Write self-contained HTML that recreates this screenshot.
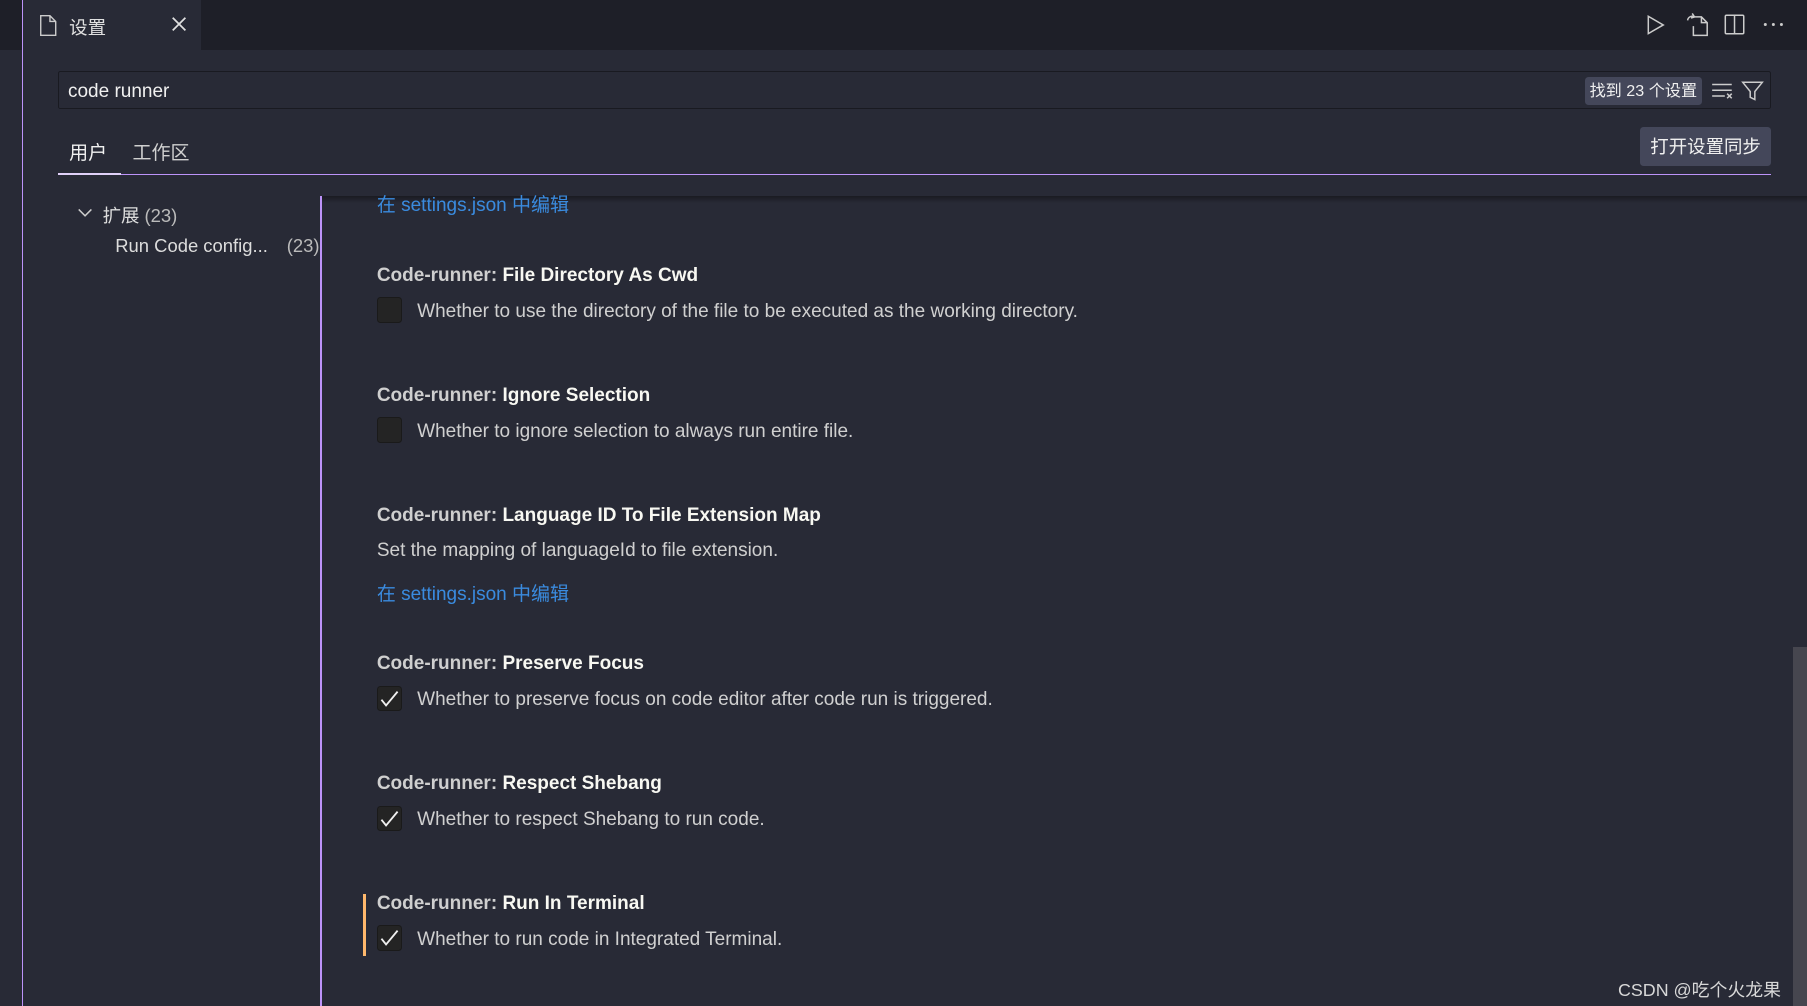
<!DOCTYPE html>
<html><head><meta charset="utf-8"><style>
html,body{margin:0;padding:0;background:#282a36;overflow:hidden}
body{zoom:1.15242;width:1568px;height:873px;position:relative;font-family:"Liberation Sans","Noto Sans CJK SC",sans-serif;color:#cccccc}
.a{position:absolute}
.vline{position:absolute;width:1px;background:#bd93f9}
.title{font-size:16.5px;font-weight:bold;color:#cfcfcf;white-space:nowrap}
.title b{color:#f8f8f2}
.desc{font-size:16.5px;color:#d0d0d0;white-space:nowrap}
.cb{position:absolute;width:22px;height:22px;background:#242424;border:1px solid #1a1a1a;border-radius:3px;box-sizing:border-box}
.link{color:#3a8bdf;font-size:16.5px;white-space:nowrap}
</style></head><body>
<div class="a" style="left:0;top:0;width:1568px;height:43px;background:#1e1f28"></div>
<div class="a" style="left:20px;top:0;width:154px;height:43px;background:#282a36"></div>
<div class="vline" style="left:19px;top:0;height:873px"></div>
<svg class="a" style="left:34px;top:12px" width="16" height="20" viewBox="0 0 16 20"><path d="M1.5 1.5h8l5 5v12h-13z M9.5 1.5v5h5" fill="none" stroke="#ccc" stroke-width="1.2"/></svg>
<div class="a" style="left:60px;top:12px;font-size:16px;color:#e0e0e0">设置</div>
<svg class="a" style="left:148px;top:14px" width="14" height="14" viewBox="0 0 14 14"><path d="M1.5 1.5l11 11M12.5 1.5l-11 11" stroke="#e0e0e0" stroke-width="1.5"/></svg>
<svg class="a" style="left:1428px;top:12px" width="18" height="20" viewBox="0 0 18 20"><path d="M2 2v15l13-7.5z" fill="none" stroke="#ccc" stroke-width="1.3"/></svg>
<svg class="a" style="left:1460px;top:9px" width="24" height="24" viewBox="0 0 24 24"><path d="M9 6h7l5 5v11H9v-8 M16 6v5h5 M4 9a4 4 0 0 1 6-3 M8 3l2 3-3 1" fill="none" stroke="#ccc" stroke-width="1.3"/></svg>
<svg class="a" style="left:1495px;top:11px" width="20" height="20" viewBox="0 0 20 20"><rect x="2" y="2" width="16" height="16" rx="1" fill="none" stroke="#ccc" stroke-width="1.3"/><path d="M10 2v16" stroke="#ccc" stroke-width="1.3"/></svg>
<svg class="a" style="left:1530px;top:18px" width="18" height="6" viewBox="0 0 18 6"><circle cx="2" cy="3" r="1.3" fill="#ccc"/><circle cx="9" cy="3" r="1.3" fill="#ccc"/><circle cx="16" cy="3" r="1.3" fill="#ccc"/></svg>

<div class="a" style="left:50px;top:62px;width:1487px;height:33px;background:#282a36;border:1px solid #191a21;box-sizing:border-box;border-radius:2px"></div>
<div class="a" style="left:59px;top:70px;font-size:16.5px;color:#f0f0f0">code runner</div>
<div class="a" style="left:1375px;top:67px;width:102px;height:24px;background:#44475a;border-radius:3px;font-size:14px;color:#f0f0f0;line-height:25px;text-align:center">找到 23 个设置</div>
<svg class="a" style="left:1485px;top:70px" width="20" height="18" viewBox="0 0 20 18"><path d="M1 3h17M1 8h17M1 13h11M14 11l4 4M18 11l-4 4" stroke="#ccc" stroke-width="1.3" fill="none"/></svg>
<svg class="a" style="left:1511px;top:69px" width="20" height="20" viewBox="0 0 20 20"><path d="M1.5 2h17l-6.5 8v7l-4-2v-5z" fill="none" stroke="#ccc" stroke-width="1.3"/></svg>

<div class="a" style="left:60px;top:120px;font-size:16.5px;color:#f0f0f0">用户</div>
<div class="a" style="left:115px;top:120px;font-size:16.5px;color:#d0d0d0">工作区</div>
<div class="a" style="left:50px;top:151px;width:1487px;height:1px;background:#bd93f9"></div>
<div class="a" style="left:50px;top:150px;width:55px;height:2px;background:#e0d0f8"></div>
<div class="a" style="left:1423px;top:110px;width:114px;height:34px;background:#44475a;border-radius:3px;font-size:16px;color:#f0f0f0;line-height:35px;text-align:center">打开设置同步</div>

<svg class="a" style="left:67px;top:179px" width="14" height="12" viewBox="0 0 14 12"><path d="M1.5 3l5.5 5.5L12.5 3" fill="none" stroke="#ccc" stroke-width="1.3"/></svg>
<div class="a" style="left:89px;top:175px;font-size:16px;color:#ddd">扩展 <span style="color:#bbb">(23)</span></div>
<div class="a" style="left:100px;top:204px;font-size:16px;color:#ddd">Run Code config... <span style="color:#bbb;margin-left:12px">(23)</span></div>
<div class="vline" style="left:278px;top:170px;height:703px"></div>
<div class="a" style="left:279px;top:170px;width:1289px;height:6px;background:linear-gradient(#1a1b22,rgba(40,42,54,0))"></div>

<div class="a link" style="left:327px;top:165px">在 settings.json 中编辑</div>

<div class="a title" style="left:327px;top:230px">Code-runner: <b>File Directory As Cwd</b></div>
<div class="cb" style="left:327px;top:258px"></div>
<div class="a desc" style="left:362px;top:261px">Whether to use the directory of the file to be executed as the working directory.</div>

<div class="a title" style="left:327px;top:334px">Code-runner: <b>Ignore Selection</b></div>
<div class="cb" style="left:327px;top:362px"></div>
<div class="a desc" style="left:362px;top:365px">Whether to ignore selection to always run entire file.</div>

<div class="a title" style="left:327px;top:438px">Code-runner: <b>Language ID To File Extension Map</b></div>
<div class="a desc" style="left:327px;top:469px">Set the mapping of languageId to file extension.</div>
<div class="a link" style="left:327px;top:502px">在 settings.json 中编辑</div>

<div class="a title" style="left:327px;top:567px">Code-runner: <b>Preserve Focus</b></div>
<div class="cb" style="left:327px;top:595px"><svg width="20" height="20" viewBox="0 0 20 20"><path d="M3 11l4 5 10-12" fill="none" stroke="#f0f0f0" stroke-width="1.6"/></svg></div>
<div class="a desc" style="left:362px;top:598px">Whether to preserve focus on code editor after code run is triggered.</div>

<div class="a title" style="left:327px;top:671px">Code-runner: <b>Respect Shebang</b></div>
<div class="cb" style="left:327px;top:699px"><svg width="20" height="20" viewBox="0 0 20 20"><path d="M3 11l4 5 10-12" fill="none" stroke="#f0f0f0" stroke-width="1.6"/></svg></div>
<div class="a desc" style="left:362px;top:702px">Whether to respect Shebang to run code.</div>

<div class="a" style="left:315px;top:776px;width:3px;height:54px;background:#ffb86c"></div>
<div class="a title" style="left:327px;top:775px">Code-runner: <b>Run In Terminal</b></div>
<div class="cb" style="left:327px;top:803px"><svg width="20" height="20" viewBox="0 0 20 20"><path d="M3 11l4 5 10-12" fill="none" stroke="#f0f0f0" stroke-width="1.6"/></svg></div>
<div class="a desc" style="left:362px;top:806px">Whether to run code in Integrated Terminal.</div>

<div class="a" style="left:1556px;top:561px;width:12px;height:312px;background:#46464f"></div>
<div class="a" style="left:1404px;top:847px;font-size:15.5px;color:#d8d8d8">CSDN @吃个火龙果</div>
</body></html>
